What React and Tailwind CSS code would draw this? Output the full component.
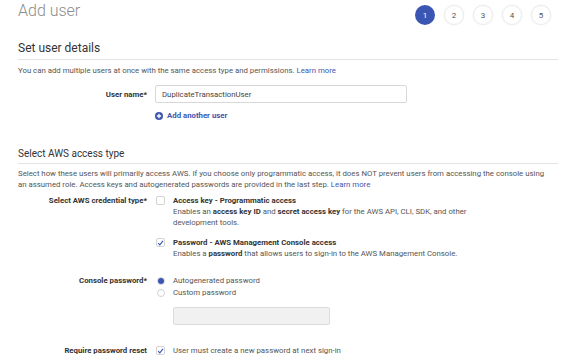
const Check = ({ checked }) => (
  <div className="w-[9px] h-[9px] mt-[1px] ml-[1px] border border-[#d3d3d3] rounded-[2px] bg-white flex items-center justify-center shrink-0">
    {checked && (
      <svg width="8" height="8" viewBox="0 0 10 10">
        <path d="M1.5 5.2 L4 7.6 L8.6 2" fill="none" stroke="#3b55b3" strokeWidth="1.6" />
      </svg>
    )}
  </div>
);

const Radio = ({ on }) => (
  <div className="w-[8px] h-[8px] ml-[2px] rounded-full border border-[#d3d3d3] flex items-center justify-center shrink-0">
    {on && <div className="w-[6px] h-[6px] rounded-full bg-[#3b55b3]" />}
  </div>
);

const Label = ({ children }) => (
  <div className="w-[130px] shrink-0 text-right font-bold text-[#333] pr-[1px]">{children}</div>
);

export default function App() {
  return (
    <div
      className="w-[570px] h-[362px] overflow-hidden bg-white pl-[18px] pr-[12px] text-[7.8px] leading-[11px] text-[#555]"
      style={{ fontFamily: "Roboto, 'Liberation Sans', sans-serif" }}
    >
      {/* Header */}
      <div className="flex items-start justify-between h-[25px]">
        <div className="text-[16px] leading-[22px] font-light text-[#8c8c8c]">Add user</div>
        <div className="flex gap-[9px] pt-[5px] mr-[7px]">
          {[1, 2, 3, 4, 5].map((n) => (
            <div
              key={n}
              className={
                n === 1
                  ? "w-[20px] h-[20px] rounded-full bg-[#3b55b3] text-white flex items-center justify-center text-[8px]"
                  : "w-[20px] h-[20px] rounded-full bg-white border border-[#ececec] shadow-[0_0_2px_rgba(0,0,0,0.08)] text-[#555] flex items-center justify-center text-[8px]"
              }
            >
              {n}
            </div>
          ))}
        </div>
      </div>

      {/* Set user details */}
      <div className="mt-[15px] pb-[3px] border-b border-[#e3e3e3] text-[12px] leading-[16px] text-[#333]">
        Set user details
      </div>
      <div className="mt-[5px]">
        You can add multiple users at once with the same access type and permissions.{" "}
        <span className="text-[#3f55b0]">Learn more</span>
      </div>

      <div className="mt-[9px] flex items-center gap-[7px]">
        <Label>User name*</Label>
        <div className="w-[252px] h-[18px] border border-[#d8d8d8] rounded-[2px] px-[6px] flex items-center text-[#444]">
          DuplicateTransactionUser
        </div>
      </div>
      <div className="mt-[7px] ml-[137px] flex items-center gap-[4px] text-[#3f55b0] font-bold">
        <svg width="8" height="8" viewBox="0 0 10 10">
          <circle cx="5" cy="5" r="5" fill="#3f55b0" />
          <path d="M5 2.3 V7.7 M2.3 5 H7.7" stroke="white" strokeWidth="1.6" />
        </svg>
        <span>Add another user</span>
      </div>

      {/* Select AWS access type */}
      <div className="mt-[25px] pb-[2px] border-b border-[#e3e3e3] text-[10px] leading-[15px] text-[#333]">
        Select AWS access type
      </div>
      <div className="mt-[4px] pr-[10px]">
        Select how these users will primarily access AWS. If you choose only programmatic access, it does NOT prevent users from accessing the console using an assumed role. Access keys and autogenerated passwords are provided in the last step.{" "}
        <span className="text-[#3f55b0]">Learn more</span>
      </div>

      <div className="mt-[5px] flex items-start gap-[7px]">
        <Label>Select AWS credential type*</Label>
        <div className="flex flex-col">
          <div className="flex items-start gap-[8px]">
            <Check checked={false} />
            <div className="w-[312px]">
              <div className="font-bold text-[#333]">Access key - Programmatic access</div>
              <div>
                Enables an <b className="text-[#333]">access key ID</b> and{" "}
                <b className="text-[#333]">secret access key</b> for the AWS API, CLI, SDK, and other development tools.
              </div>
            </div>
          </div>
          <div className="mt-[9px] flex items-start gap-[8px]">
            <Check checked />
            <div>
              <div className="font-bold text-[#333]">Password - AWS Management Console access</div>
              <div>
                Enables a <b className="text-[#333]">password</b> that allows users to sign-in to the AWS Management Console.
              </div>
            </div>
          </div>
        </div>
      </div>

      <div className="mt-[16px] flex items-start gap-[7px] leading-[12px]">
        <Label>Console password*</Label>
        <div className="flex flex-col">
          <div className="flex items-center gap-[8px]">
            <Radio on />
            <span>Autogenerated password</span>
          </div>
          <div className="flex items-center gap-[8px]">
            <Radio />
            <span>Custom password</span>
          </div>
          <div className="mt-[8px] ml-[18px] w-[157px] h-[18px] bg-[#f1f1f1] border border-[#dcdcdc] rounded-[2px]" />
        </div>
      </div>

      <div className="mt-[20px] flex items-start gap-[7px]">
        <Label>Require password reset</Label>
        <div className="flex items-start gap-[8px]">
          <Check checked />
          <span>User must create a new password at next sign-in</span>
        </div>
      </div>
    </div>
  );
}
